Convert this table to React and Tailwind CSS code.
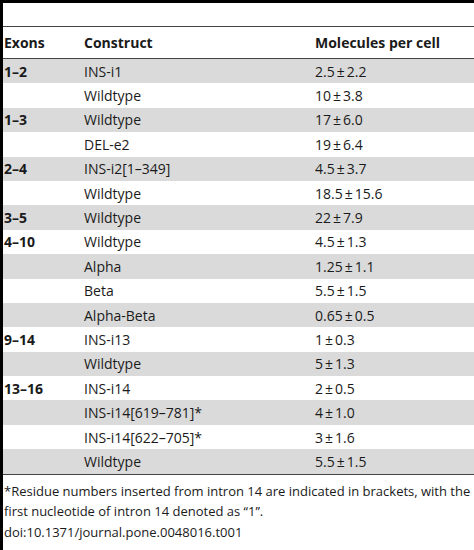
const rows = [
  ['1–2', 'INS-i1', '2.5±2.2'],
  ['', 'Wildtype', '10±3.8'],
  ['1–3', 'Wildtype', '17±6.0'],
  ['', 'DEL-e2', '19±6.4'],
  ['2–4', 'INS-i2[1–349]', '4.5±3.7'],
  ['', 'Wildtype', '18.5±15.6'],
  ['3–5', 'Wildtype', '22±7.9'],
  ['4–10', 'Wildtype', '4.5±1.3'],
  ['', 'Alpha', '1.25±1.1'],
  ['', 'Beta', '5.5±1.5'],
  ['', 'Alpha-Beta', '0.65±0.5'],
  ['9–14', 'INS-i13', '1±0.3'],
  ['', 'Wildtype', '5±1.3'],
  ['13–16', 'INS-i14', '2±0.5'],
  ['', 'INS-i14[619–781]*', '4±1.0'],
  ['', 'INS-i14[622–705]*', '3±1.6'],
  ['', 'Wildtype', '5.5±1.5'],
];

function Value({ text }) {
  // put a little space around the ± like the typeset table
  const [a, b] = text.split('±');
  return (
    <span>
      {a}
      <span className="mx-[2px]">±</span>
      {b}
    </span>
  );
}

export default function App() {
  return (
    <div
      className="w-[474px] h-[550px] bg-white border-l-[3px] border-t-[3px] border-black text-[#1a1a1a] overflow-hidden"
      style={{ fontFamily: '"Open Sans", "Noto Sans", sans-serif' }}
    >
      <div className="h-[23px]" />
      <div className="border-t border-[#444]" />
      <div className="flex items-center h-[31px] text-[14px] font-bold">
        <div className="w-[81px] pl-[1px]">Exons</div>
        <div className="w-[231px]">Construct</div>
        <div>Molecules per cell</div>
      </div>
      <div className="border-t border-[#444]" />
      <div className="text-[14px]">
        {rows.map((r, i) => (
          <div
            key={i}
            className={`flex items-center h-[24.4px] ${i % 2 === 0 ? 'bg-[#dadada]' : 'bg-white'}`}
          >
            <div className="w-[81px] pl-[1px] font-bold">{r[0]}</div>
            <div className="w-[231px]">{r[1]}</div>
            <div>
              <Value text={r[2]} />
            </div>
          </div>
        ))}
      </div>
      <div className="border-t border-[#444]" />
      <div className="pt-[6px] pl-[1px] text-[13px] leading-[20.5px]">
        <p>
          *Residue numbers inserted from intron 14 are indicated in brackets, with the first nucleotide of intron 14 denoted as ‘‘1’’.
        </p>
        <p>doi:10.1371/journal.pone.0048016.t001</p>
      </div>
    </div>
  );
}
